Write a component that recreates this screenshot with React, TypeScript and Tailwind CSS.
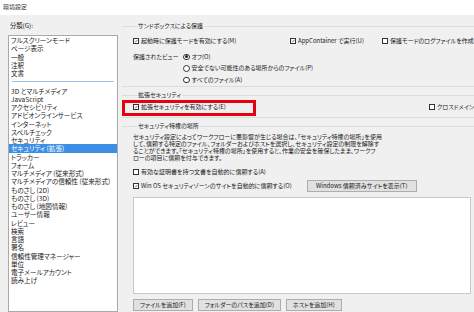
import React from 'react';

const categories = [
    'フルスクリーンモード',
    'ページ表示',
    '一般',
    '注釈',
    '文書',
    '---',
    '3D とマルチメディア',
    'JavaScript',
    'アクセシビリティ',
    'アドビオンラインサービス',
    'インターネット',
    'スペルチェック',
    'セキュリティ',
    'セキュリティ (拡張)',
    'トラッカー',
    'フォーム',
    'マルチメディア (従来形式)',
    'マルチメディアの信頼性 (従来形式)',
    'ものさし (2D)',
    'ものさし (3D)',
    'ものさし (地図情報)',
    'ユーザー情報',
    'レビュー',
    '検索',
    '言語',
    '署名',
    '信頼性管理マネージャー',
    '単位',
    '電子メールアカウント',
    '読み上げ',
];

const Check = ({ checked, label }: { checked?: boolean; label: string }) => (
    <div className="flex items-center gap-[2px] h-[8px] whitespace-nowrap">
        <span className="w-[6px] h-[6px] border border-[#333] bg-white flex items-center justify-center shrink-0">
            {checked && (
                <svg viewBox="0 0 10 10" className="w-[6px] h-[6px]">
                    <path d="M1.6 5.2 L4.1 7.6 L8.6 2.4" fill="none" stroke="#222" strokeWidth="1.5" />
                </svg>
            )}
        </span>
        <span>{label}</span>
    </div>
);

const Radio = ({ checked, label }: { checked?: boolean; label: string }) => (
    <div className="flex items-center gap-[2px] h-[11.5px] whitespace-nowrap">
        <span className="w-[6.5px] h-[6.5px] rounded-full border border-[#333] bg-white flex items-center justify-center shrink-0">
            {checked && <span className="w-[3px] h-[3px] rounded-full bg-[#222]" />}
        </span>
        <span>{label}</span>
    </div>
);

const Button = ({ label, wide }: { label: string; wide?: boolean }) => (
    <div className={`h-[12px] border border-[#adadad] bg-[#e1e1e1] flex items-center whitespace-nowrap ${wide ? 'px-[8px]' : 'px-[6px]'}`}>
        {label}
    </div>
);

const App = () => {
    return (
        <div className="w-[474px] h-[312px] overflow-hidden bg-[#f0f0f0] text-[#1a1a1a] font-['Noto_Sans_CJK_JP','Noto_Sans',sans-serif] [font-feature-settings:'palt']">
            {/* Title */}
            <div className="h-[15px] bg-white pl-[3px] text-[6px] leading-[14px] text-[#333]">環境設定</div>

            <div className="flex h-[297px]">
                {/* Category list */}
                <div className="w-[120px] shrink-0 pl-[8px] pt-[7px] flex flex-col">
                    <div className="pl-[2px] h-[8px] text-[6.3px] leading-[8px]">分類(G):</div>
                    <div className="mt-[5px] w-[110px] flex-1 border border-[#a9a9a9] bg-white text-[6.6px] leading-[8.25px] overflow-hidden">
                        {categories.map((c, i) =>
                            c === '---' ? (
                                <div key={i} className="h-[9.4px] flex items-center px-[3px]">
                                    <div className="w-full h-px bg-[#9cc3ec]" />
                                </div>
                            ) : (
                                <div
                                    key={i}
                                    className={`px-[2px] whitespace-nowrap ${c === 'セキュリティ (拡張)' ? 'bg-[#3d8fe6] text-white' : ''}`}
                                >
                                    {c}
                                </div>
                            )
                        )}
                    </div>
                </div>

                {/* Right pane */}
                <div className="pl-[2px] w-[380px] shrink-0 text-[6px] leading-[8px]">
                    {/* サンドボックスによる保護 */}
                    <fieldset className="mt-[7px] border-y border-[#dcdcdc] pl-[11px] pt-[7px] h-[65px]">
                        <legend className="ml-[4px] px-[1px] h-[8px]">サンドボックスによる保護</legend>
                        <div className="flex">
                            <div className="w-[157px]"><Check checked label="起動時に保護モードを有効にする(M)" /></div>
                            <div className="w-[92px]"><Check checked label="AppContainer で実行(U)" /></div>
                            <Check label="保護モードのログファイルを作成(L)" />
                        </div>
                        <div className="flex mt-[6px]">
                            <div className="w-[50px] h-[11.5px] flex items-center">保護されたビュー</div>
                            <div className="flex flex-col">
                                <Radio checked label="オフ(O)" />
                                <Radio label="安全でない可能性のある場所からのファイル(P)" />
                                <Radio label="すべてのファイル(A)" />
                            </div>
                        </div>
                    </fieldset>

                    {/* 拡張セキュリティ */}
                    <fieldset className="mt-[4px] border-y border-[#dcdcdc] pl-[11px] pt-[4px] pb-[6px]">
                        <legend className="ml-[4px] px-[1px] h-[8px]">拡張セキュリティ</legend>
                        <div className="relative flex">
                            <div className="w-[296px]"><Check checked label="拡張セキュリティを有効にする(E)" /></div>
                            <Check label="クロスドメインログファイルを作成(C)" />
                            <div className="absolute -left-[11px] -top-[3px] w-[134px] h-[16px] border-[3px] border-[#e60012] pointer-events-none" />
                        </div>
                    </fieldset>

                    {/* セキュリティ特権の場所 */}
                    <fieldset className="mt-[4px] border-y border-[#dcdcdc] pl-[11px] pt-[3px] h-[200px]">
                        <legend className="ml-[4px] px-[1px] h-[8px]">セキュリティ特権の場所</legend>
                        <div className="text-[6px] leading-[7px] whitespace-nowrap">
                            <div>セキュリティ設定によってワークフローに悪影響が生じる場合は、「セキュリティ特権の場所」を使用</div>
                            <div>して、信頼する特定のファイル、フォルダーおよびホストを選択し、セキュリティ設定の制限を解除す</div>
                            <div>ることができます。「セキュリティ特権の場所」を使用すると、作業の安全を確保したまま、ワークフ</div>
                            <div>ローの項目に信頼を付与できます。</div>
                        </div>
                        <div className="mt-[7px]"><Check label="有効な証明書を持つ文書を自動的に信頼する(A)" /></div>
                        <div className="mt-[4px] flex items-center h-[12px]">
                            <div className="w-[174px]"><Check checked label="Win OS セキュリティゾーンのサイトを自動的に信頼する(O)" /></div>
                            <Button wide label="Windows 信頼済みサイトを表示(T)" />
                        </div>
                        <div className="mt-[5px] w-[338px] h-[97px] border border-[#c8c8c8] bg-white" />
                        <div className="mt-[5px] flex gap-[5px]">
                            <Button label="ファイルを追加(F)" />
                            <Button label="フォルダーのパスを追加(D)" />
                            <Button label="ホストを追加(H)" />
                        </div>
                    </fieldset>
                </div>
            </div>
        </div>
    );
};

export default App;
